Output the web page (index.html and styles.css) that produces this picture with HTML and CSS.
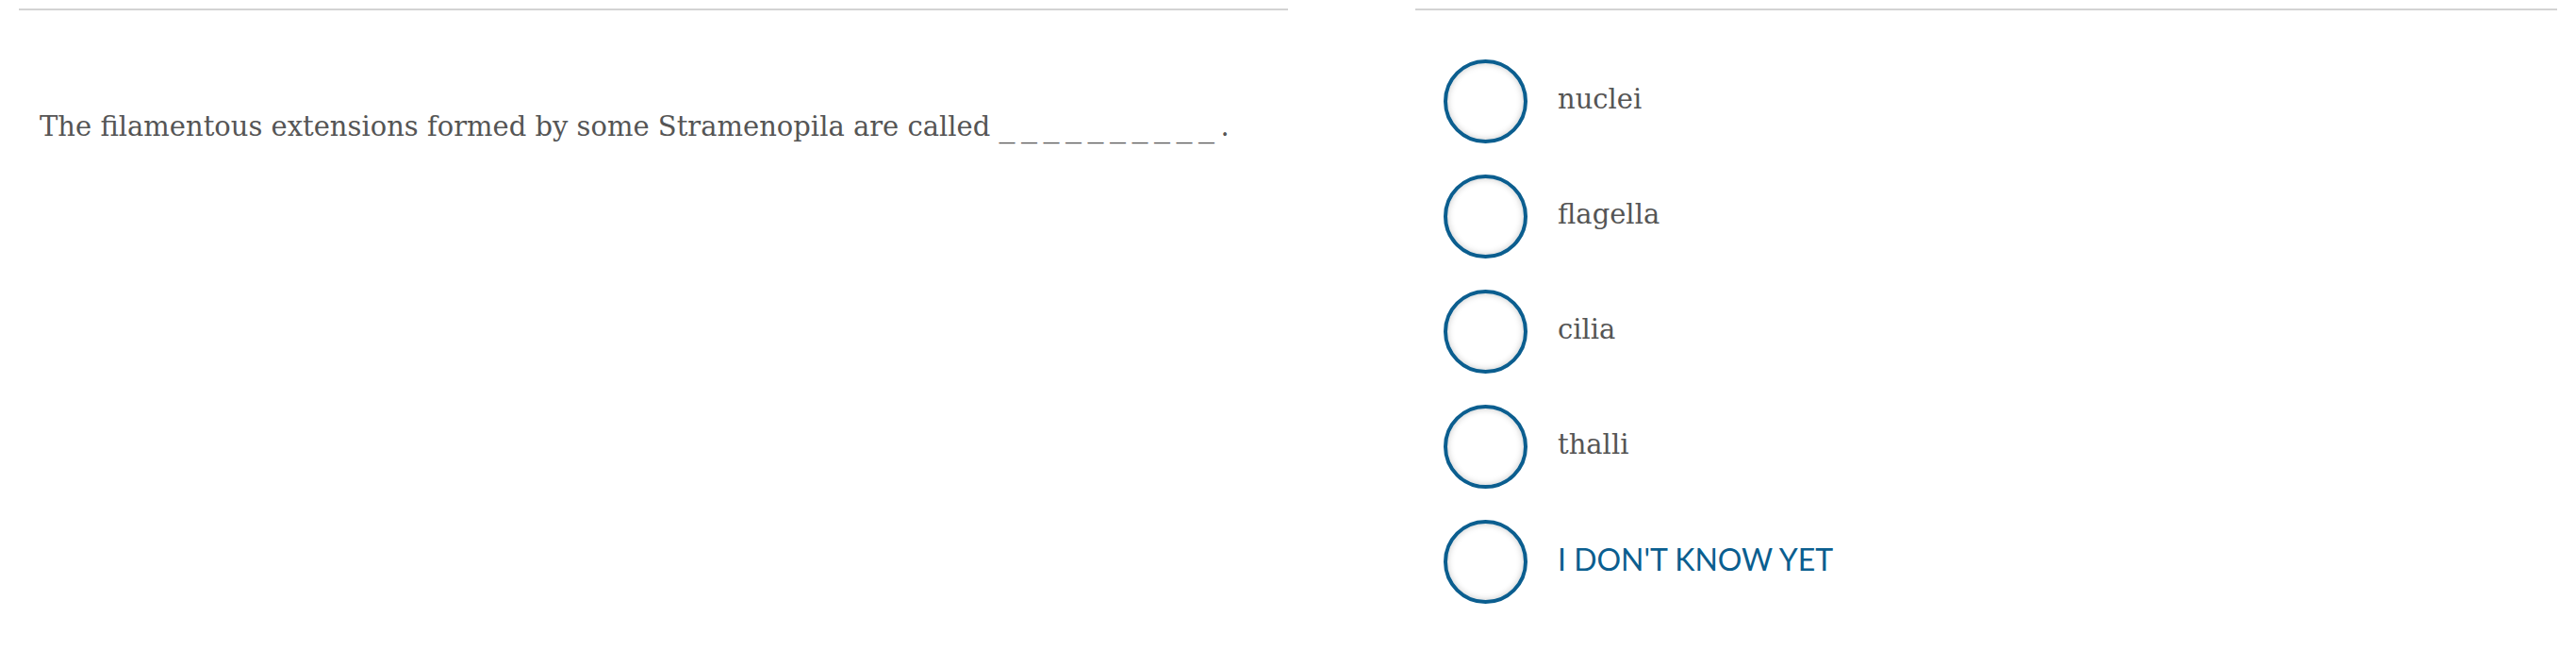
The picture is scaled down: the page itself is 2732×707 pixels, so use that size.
FILE: index.html
```html
<!DOCTYPE html>
<html lang="en">
<head>
<meta charset="utf-8">
<title>Question</title>
<link rel="stylesheet" href="styles.css">
</head>
<body>
<div class="page">
  <section class="col col-question">
    <div class="panel">
      <p class="question">The filamentous extensions formed by some Stramenopila are called <span class="blank">__________</span>.</p>
    </div>
  </section>
  <section class="col col-answers">
    <div class="panel">
      <ul class="options">
        <li class="option"><span class="radio"></span><span class="label">nuclei</span></li>
        <li class="option"><span class="radio"></span><span class="label">flagella</span></li>
        <li class="option"><span class="radio"></span><span class="label">cilia</span></li>
        <li class="option"><span class="radio"></span><span class="label">thalli</span></li>
        <li class="option"><span class="radio"></span><span class="label label-unknown">I DON'T KNOW YET</span></li>
      </ul>
    </div>
  </section>
</div>
</body>
</html>
```

FILE: styles.css
```css
html, body {
  margin: 0;
  padding: 0;
  background: #ffffff;
}

.page {
  display: flex;
  padding: 9px 20px 0;
}

.col {
  width: 50%;
  box-sizing: border-box;
}

.col-answers {
  padding-left: 135px;
}

.panel {
  border-top: 2px solid #d3d3d3;
}

.question {
  margin: 0;
  padding: 99px 0 0 22px;
  font-family: "DejaVu Serif", serif;
  font-size: 29px;
  line-height: 48px;
  color: #555555;
}

.blank {
  font-size: 34px;
  letter-spacing: 6.5px;
  line-height: 1;
}

.options {
  list-style: none;
  margin: 0;
  padding: 52px 0 0 30px;
  display: flex;
  flex-direction: column;
  gap: 33px;
}

.option {
  display: flex;
  align-items: center;
  gap: 32px;
}

.radio {
  flex: none;
  width: 89px;
  height: 89px;
  box-sizing: border-box;
  border: 4px solid #0b5e8f;
  border-radius: 50%;
  background: #ffffff;
  box-shadow: inset 0 0 7px rgba(0, 0, 0, 0.22);
}

.label {
  padding-bottom: 6px;
  font-family: "DejaVu Serif", serif;
  font-size: 29px;
  color: #555555;
}

.label-unknown {
  font-family: Lato, sans-serif;
  font-size: 32px;
  color: #0b5e8f;
}
```
